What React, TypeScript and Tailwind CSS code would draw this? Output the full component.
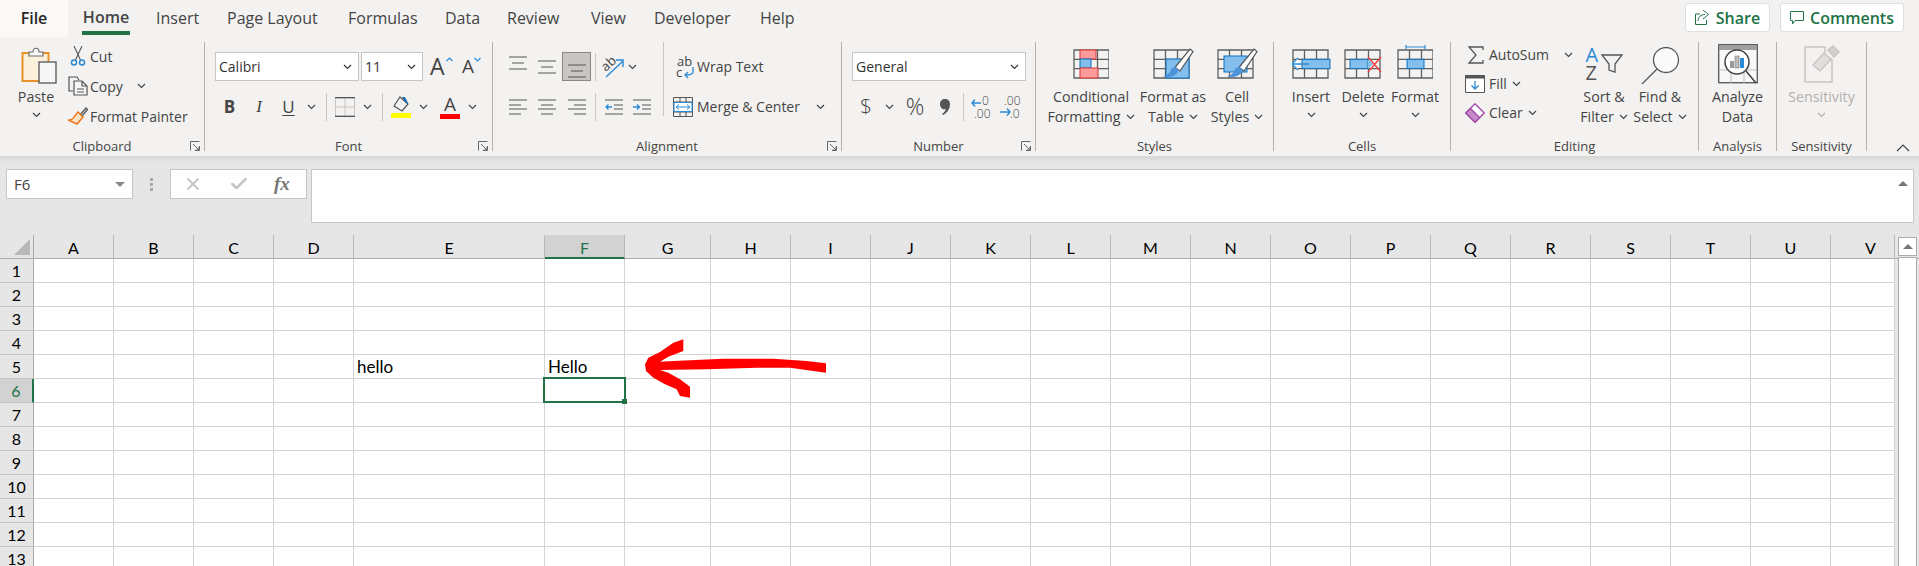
import type { ReactNode } from "react";
import { Check, X } from "lucide-react";

const GREEN = "#217346";
const BLUE = "#2b8ad6";

const tabs = [
  { name: "Insert", w: "w-[71px]" },
  { name: "Page Layout", w: "w-[121px]" },
  { name: "Formulas", w: "w-[97px]" },
  { name: "Data", w: "w-[62px]" },
  { name: "Review", w: "w-[84px]" },
  { name: "View", w: "w-[63px]" },
  { name: "Developer", w: "w-[106px]" },
  { name: "Help", w: "w-[60px]" },
];

const columns = [
  { name: "A", w: "w-[80px]" },
  { name: "B", w: "w-[80px]" },
  { name: "C", w: "w-[80px]" },
  { name: "D", w: "w-[80px]" },
  { name: "E", w: "w-[191px]" },
  { name: "F", w: "w-[80px]" },
  { name: "G", w: "w-[86px]" },
  { name: "H", w: "w-[80px]" },
  { name: "I", w: "w-[80px]" },
  { name: "J", w: "w-[80px]" },
  { name: "K", w: "w-[80px]" },
  { name: "L", w: "w-[80px]" },
  { name: "M", w: "w-[80px]" },
  { name: "N", w: "w-[80px]" },
  { name: "O", w: "w-[80px]" },
  { name: "P", w: "w-[80px]" },
  { name: "Q", w: "w-[80px]" },
  { name: "R", w: "w-[80px]" },
  { name: "S", w: "w-[80px]" },
  { name: "T", w: "w-[80px]" },
  { name: "U", w: "w-[80px]" },
  { name: "V", w: "w-[64px]" },
];

const rows = [1, 2, 3, 4, 5, 6, 7, 8, 9, 10, 11, 12, 13];

function Chev({ className = "" }: { className?: string }) {
  return (
    <svg width="9" height="6" viewBox="0 0 9 6" className={className} fill="none" stroke="currentColor" strokeWidth="1.2">
      <path d="M1 1l3.5 3.5L8 1" />
    </svg>
  );
}

function Launcher() {
  return (
    <svg width="10" height="10" viewBox="0 0 10 10" className="absolute right-[4px] bottom-0" fill="none" stroke="#666" strokeWidth="1">
      <path d="M.5 9.5v-9h9M9.5 5v4.5H5M3 3l6 6M5.5 9H9V5.5" />
    </svg>
  );
}

function Group({ w, label, children }: { w: string; label: string; children: ReactNode }) {
  return (
    <div className={`${w} relative flex h-[109px] shrink-0 flex-col border-r border-[#b3b0ad]`}>
      <div className="h-[95px] shrink-0">{children}</div>
      <div className="text-center text-[13px] leading-[18px] text-[#444]">{label}</div>
    </div>
  );
}

function Big({ w, icon, lines, chev, last, gray }: { w: string; icon: ReactNode; lines: string[]; chev?: boolean; last?: boolean; gray?: boolean }) {
  return (
    <div className={`${w} flex shrink-0 flex-col items-center text-[14.25px] leading-[20px] ${gray ? "text-[#b3b0ad]" : "text-[#444]"}`}>
      <div className="flex h-[45px] items-start justify-center">{icon}</div>
      {lines.map((l, i) => (
        <div key={l} className="flex h-[20px] items-center gap-[5px] whitespace-nowrap">
          {l}
          {chev && i === lines.length - 1 && <Chev />}
        </div>
      ))}
      {last && <Chev className="mt-[5px]" />}
    </div>
  );
}

function AlignV({ pos }: { pos: number }) {
  return (
    <svg width="18" height="26" viewBox="0 0 18 26" stroke="#555" strokeWidth="1.2">
      <path d={`M0 ${pos}h18M3 ${pos + 6}h12M0 ${pos + 12}h18`} />
    </svg>
  );
}

function AlignH({ kind }: { kind: "l" | "c" | "r" }) {
  const short = kind === "l" ? 0 : kind === "c" ? 3 : 6;
  return (
    <svg width="18" height="18" viewBox="0 0 18 18" stroke="#555" strokeWidth="1.2">
      <path d={`M0 2h18M${short} 7h12M0 11h18M${short} 16h12`} />
    </svg>
  );
}

function Indent({ inc }: { inc?: boolean }) {
  return (
    <svg width="18" height="18" viewBox="0 0 18 18" fill="none">
      <path d="M0 2h18M9 7h9M9 11h9M0 16h18" stroke="#555" strokeWidth="1.2" />
      {inc ? <path d="M0 9h6M4 6.5L6.5 9 4 11.5" stroke={BLUE} strokeWidth="1.4" /> : <path d="M7 9H1M3.5 6.5L1 9l2.5 2.5" stroke={BLUE} strokeWidth="1.4" />}
    </svg>
  );
}

function Grid({ children, w = 36, h = 28, extra = 0 }: { children?: ReactNode; w?: number; h?: number; extra?: number }) {
  return (
    <svg width={w + extra} height={h + 6} viewBox={`-1 -5 ${w + extra} ${h + 6}`} className="mt-[3px]" fill="none">
      <path d="M0 0h35v28H0zM0 9.3h35M0 18.6h35M11.5 0v28M23.5 0v28" stroke="#5f5f5f" strokeWidth="1.3" />
      {children}
    </svg>
  );
}

function Brush() {
  return (
    <g>
      <path d="M36 -1l3 2.5L26 21l-5-3.5z" fill="#fff" stroke="#555" strokeWidth="1.2" />
      <path d="M21 17c-4 0-4 4-6 6-2 2-4 3-6 3 5 2 12 1 15-4 1-2-.5-4.5-3-5z" fill="#4d93d9" />
    </g>
  );
}

function Sep({ h = "h-[28px]" }: { h?: string }) {
  return <div className={`${h} w-px bg-[#c8c6c4]`} />;
}

function Box({ w, children, className = "" }: { w: string; children: ReactNode; className?: string }) {
  return <div className={`${w} flex h-[29px] shrink-0 items-center justify-center ${className}`}>{children}</div>;
}

function Select({ w, text }: { w: string; text: string }) {
  return (
    <div className={`${w} flex h-[29px] shrink-0 items-center justify-between border border-[#c8c6c4] bg-white pr-[6px] pl-[3px] text-[14px] text-[#333]`}>
      {text}
      <Chev />
    </div>
  );
}

function Clipboard() {
  return (
    <div className="flex">
      <div className="flex w-[66px] shrink-0 flex-col items-center pl-[6px] text-[14.25px] leading-[20px] text-[#444]">
        <svg width="36" height="40" viewBox="0 0 36 40" className="mt-[3px] ml-[5px]" fill="none">
          <rect x="1.5" y="8" width="26" height="28" fill="#fbf0dc" stroke="#e8912d" strokeWidth="2" />
          <path d="M8 11V7h4c0-5 6-5 6 0h4v4z" fill="#f8f8f8" stroke="#6e6e6e" strokeWidth="1.2" />
          <rect x="18" y="17" width="17" height="21" fill="#f7f7f7" stroke="#555" strokeWidth="1.3" />
        </svg>
        <div className="mt-[2px] h-[20px]">Paste</div>
        <Chev className="mt-[5px]" />
      </div>
      <div className="-mt-px flex flex-col text-[14px] text-[#444]">
        <div className="flex h-[30px] items-center">
          <div className="flex w-[24px] justify-center">
            <svg width="16" height="20" viewBox="0 0 16 20" fill="none">
              <path d="M4 0l6.5 14M12 0L5.5 14" stroke="#555" strokeWidth="1.1" />
              <circle cx="4" cy="16.5" r="2.5" stroke={BLUE} strokeWidth="1.5" />
              <circle cx="12" cy="16.5" r="2.5" stroke={BLUE} strokeWidth="1.5" />
            </svg>
          </div>
          Cut
        </div>
        <div className="flex h-[30px] items-center">
          <div className="flex w-[24px] justify-center">
            <svg width="20" height="20" viewBox="0 0 20 20" fill="none" stroke="#555" strokeWidth="1.2">
              <path d="M5 15H1V1h8l2 3" />
              <path d="M6 5h8l5 5v9H6zM14 5v5h5M9 13h7M9 16h7" fill="#f7f7f7" />
            </svg>
          </div>
          Copy
          <Chev className="ml-[14px]" />
        </div>
        <div className="flex h-[30px] items-center">
          <div className="flex w-[24px] justify-center">
            <svg width="20" height="20" viewBox="0 0 20 20" fill="none">
              <path d="M12 9l6-7 1.5 1.5-6 7" stroke="#555" strokeWidth="1.3" />
              <path d="M10 6l5 5-6 7-9-4c3 0 5-1 6-3z" fill="#fbe3c4" stroke="#e8761e" strokeWidth="1.5" />
            </svg>
          </div>
          Format Painter
        </div>
      </div>
    </div>
  );
}

function FontGroup() {
  return (
    <div className="pl-[10px] text-[#444]">
      <div className="mt-[10px] flex items-center">
        <Select w="w-[144px]" text="Calibri" />
        <Select w="w-[62px] ml-[2px]" text="11" />
        <div className="relative ml-[7px] flex h-[29px] w-[20px] items-center text-[23px]">
          A
          <svg width="7" height="5" viewBox="0 0 7 5" className="absolute top-[5px] left-[16px]" fill="none" stroke={BLUE} strokeWidth="1.2">
            <path d="M.5 4l3-3 3 3" />
          </svg>
        </div>
        <div className="relative ml-[12px] flex h-[29px] w-[18px] items-center text-[19px]">
          A
          <svg width="7" height="5" viewBox="0 0 7 5" className="absolute top-[5px] left-[12px]" fill="none" stroke={BLUE} strokeWidth="1.2">
            <path d="M.5 1l3 3 3-3" />
          </svg>
        </div>
      </div>
      <div className="mt-[11px] flex items-center text-[17px]">
        <Box w="w-[29px]" className="font-bold">B</Box>
        <Box w="w-[30px]" className="font-['Liberation_Serif'] italic">I</Box>
        <Box w="w-[29px]" className="underline underline-offset-2">U</Box>
        <Box w="w-[16px]"><Chev /></Box>
        <Box w="w-[14px]"><Sep /></Box>
        <Box w="w-[24px]">
          <svg width="20" height="20" viewBox="0 0 20 20" fill="none">
            <path d="M.5 1h19v18H.5zM10 1v18M.5 10h19" stroke="#c8c6c4" strokeWidth="1" />
            <path d="M0 .7h20M0 19.3h20" stroke="#555" strokeWidth="1.3" />
          </svg>
        </Box>
        <Box w="w-[20px]"><Chev /></Box>
        <Box w="w-[10px]"><Sep /></Box>
        <Box w="w-[28px]">
          <svg width="20" height="22" viewBox="0 0 20 22" fill="none">
            <path d="M9 1l8 7-6 7-8-5z" stroke="#555" strokeWidth="1.2" />
            <path d="M11 1h3l3 6v2l-5-6z" fill="#1a6fb5" />
            <rect y="17" width="20" height="5" fill="#ffff00" />
          </svg>
        </Box>
        <Box w="w-[16px]"><Chev /></Box>
        <div className="ml-[5px] flex h-[29px] w-[28px] shrink-0 flex-col items-center">
          <span className="mt-[-1px] h-[21px] text-[19px] leading-[26px]">A</span>
          <div className="mt-[2px] h-[5px] w-[20px] bg-[#ff0000]" />
        </div>
        <Box w="w-[16px]"><Chev /></Box>
      </div>
    </div>
  );
}

function Alignment() {
  return (
    <div className="flex text-[#444]">
      <div className="flex h-[74px] w-[171px] flex-col border-r border-[#c8c6c4]">
        <div className="mt-[10px] flex items-center pl-[11px]">
          <Box w="w-[28px]"><AlignV pos={3} /></Box>
          <Box w="w-[30px]"><AlignV pos={7} /></Box>
          <Box w="w-[29px]" className="border border-[#8a8886] bg-[#c8c6c4]"><AlignV pos={11} /></Box>
          <Box w="w-[9px]"><Sep /></Box>
          <Box w="w-[28px]">
            <svg width="22" height="22" viewBox="0 0 22 22" fill="none" className="overflow-visible">
              <text x="-1" y="12" transform="rotate(-42 6 9)" fontSize="13" fill="#444" fontFamily="Open Sans">ab</text>
              <path d="M3 21L20 5M13 4h7v7" stroke={BLUE} strokeWidth="1.4" />
            </svg>
          </Box>
          <Chev />
        </div>
        <div className="mt-[11px] flex items-center pl-[11px]">
          <Box w="w-[28px]"><AlignH kind="l" /></Box>
          <Box w="w-[30px]"><AlignH kind="c" /></Box>
          <Box w="w-[29px]"><AlignH kind="r" /></Box>
          <Box w="w-[9px]"><Sep /></Box>
          <Box w="w-[28px]"><Indent /></Box>
          <Box w="w-[28px]"><Indent inc /></Box>
        </div>
      </div>
      <div className="flex flex-col pl-[9px] text-[14px]">
        <div className="mt-[10px] flex h-[29px] items-center">
          <svg width="20" height="24" viewBox="0 0 20 24" fill="none" className="mr-[1px] ml-[3px] overflow-visible">
            <text x="1" y="11" fontSize="13" fill="#444" fontFamily="Open Sans">ab</text>
            <text x="0" y="22" fontSize="13" fill="#444" fontFamily="Open Sans">c</text>
            <path d="M17 12v5c0 3-5 3-8 3M12 17l-3 3 3 3" stroke={BLUE} strokeWidth="1.3" />
          </svg>
          Wrap Text
        </div>
        <div className="mt-[11px] flex h-[29px] items-center">
          <svg width="20" height="20" viewBox="0 0 20 20" fill="none" className="mr-[4px]">
            <path d="M.5 .5h19v19H.5zM.5 5h19M.5 15h19M7 .5V5M13 .5V5M7 15v4.5M13 15v4.5" stroke="#555" />
            <rect x="1" y="5.5" width="18" height="9" fill="#fff" stroke={BLUE} />
            <path d="M3 10h14M6 7.5L3 10l3 2.5M14 7.5l3 2.5-3 2.5" stroke={BLUE} />
          </svg>
          Merge &amp; Center
          <Chev className="ml-[16px]" />
        </div>
      </div>
    </div>
  );
}

function DecIcon({ inc }: { inc?: boolean }) {
  return (
    <svg width="20" height="26" viewBox="0 0 20 26" fill="none" className="overflow-visible">
      <text x={inc ? 11 : 4} y="11" fontSize="12" fill="#444" fontFamily="Open Sans">{inc ? "0" : ".00"}</text>
      <text x={inc ? 3 : 10} y="24" fontSize="12" fill="#444" fontFamily="Open Sans">{inc ? ".00" : ".0"}</text>
      {inc ? (
        <path d="M10 9H1M4 5.5L1 9l3 3.5" stroke={BLUE} strokeWidth="1.4" />
      ) : (
        <path d="M0 18h10M7 14.5l3 3.5-3 3.5" stroke={BLUE} strokeWidth="1.4" />
      )}
    </svg>
  );
}

function NumberGroup() {
  return (
    <div className="pl-[10px] text-[#444]">
      <div className="mt-[10px]">
        <Select w="w-[174px]" text="General" />
      </div>
      <div className="mt-[11px] flex items-center text-[21px] font-light">
        <Box w="w-[28px]">$</Box>
        <Box w="w-[18px]"><Chev /></Box>
        <Box w="w-[34px]" className="text-[23px]">%</Box>
        <Box w="w-[26px]">
          <svg width="10" height="16" viewBox="0 0 10 16" fill="#555">
            <path d="M5 0c3 0 5 2 5 5 0 5-3 9-7 11l-1-1c2-1 3-3 4-5-3 1-6-1-6-5 0-3 2-5 5-5z" />
          </svg>
        </Box>
        <Box w="w-[10px]"><Sep /></Box>
        <Box w="w-[25px]"><DecIcon inc /></Box>
        <Box w="w-[33px]"><DecIcon /></Box>
      </div>
    </div>
  );
}

function StylesGroup() {
  return (
    <div className="flex pl-[10px]">
      <Big
        w="w-[90px]"
        lines={["Conditional", "Formatting"]}
        chev
        icon={
          <Grid>
            <rect x="6" y="0" width="16" height="9" fill="#ff9a9a" stroke="#d83b3b" />
            <rect x="6" y="9" width="11" height="9" fill="#83beec" stroke="#0e70c0" />
            <rect x="6" y="18" width="18" height="10" fill="#ff9a9a" stroke="#d83b3b" />
          </Grid>
        }
      />
      <Big
        w="w-[74px]"
        lines={["Format as", "Table"]}
        chev
        icon={
          <Grid extra={5}>
            <rect x="12" y="9" width="23" height="19" fill="#83beec" stroke="#0e70c0" />
            <Brush />
          </Grid>
        }
      />
      <Big
        w="w-[54px]"
        lines={["Cell", "Styles"]}
        chev
        icon={
          <Grid extra={5}>
            <rect x="6" y="6" width="23" height="16" fill="#83beec" stroke="#0e70c0" />
            <Brush />
          </Grid>
        }
      />
    </div>
  );
}

function CellsGroup() {
  return (
    <div className="flex pl-[11px]">
      <Big
        w="w-[52px]"
        lines={["Insert"]}
        last
        icon={
          <Grid extra={3}>
            <rect x="9" y="9.3" width="28" height="9.3" fill="#83beec" stroke="#0e70c0" />
            <path d="M16 14H-1M5 8l-6 6 6 6" stroke={BLUE} strokeWidth="1.3" fill="#fff" />
          </Grid>
        }
      />
      <Big
        w="w-[52px]"
        lines={["Delete"]}
        last
        icon={
          <Grid extra={3}>
            <rect x="5" y="9.3" width="18" height="9.3" fill="#83beec" stroke="#0e70c0" />
            <path d="M23 9l5 5-5 5z" fill="#83beec" />
            <path d="M23 7l13 15M36 7L23 22" stroke="#f04040" strokeWidth="1.4" />
          </Grid>
        }
      />
      <Big
        w="w-[52px]"
        lines={["Format"]}
        last
        icon={
          <Grid>
            <rect x="9" y="9.3" width="17" height="9.3" fill="#83beec" stroke="#0e70c0" />
            <path d="M8 -3h19M8 -5v4M27 -5v4" stroke={BLUE} strokeWidth="1.2" />
          </Grid>
        }
      />
    </div>
  );
}

function EditingGroup() {
  return (
    <div className="flex pl-[14px]">
      <div className="-mt-[2px] flex w-[113px] shrink-0 flex-col text-[14px] text-[#444]">
        <div className="flex h-[29px] items-center">
          <div className="w-[24px] shrink-0">
            <svg width="18" height="18" viewBox="0 0 18 18" fill="none" stroke="#555" strokeWidth="1.3" className="ml-[2px]">
              <path d="M16 4V1H2l7 8-7 8h14v-3" />
            </svg>
          </div>
          AutoSum
          <Chev className="ml-[15px]" />
        </div>
        <div className="flex h-[29px] items-center">
          <div className="w-[24px] shrink-0">
            <svg width="20" height="18" viewBox="0 0 20 18" fill="none">
              <path d="M.5 .5h19v17H.5z" fill="#fff" stroke="#555" />
              <path d="M0 2h20" stroke="#555" strokeWidth="3" />
              <path d="M10 6v8M6.5 10.5L10 14l3.5-3.5" stroke={BLUE} strokeWidth="1.3" />
            </svg>
          </div>
          Fill
          <Chev className="ml-[5px]" />
        </div>
        <div className="flex h-[29px] items-center">
          <div className="w-[24px] shrink-0">
            <svg width="20" height="20" viewBox="0 0 20 20" fill="none">
              <path d="M10 .8L19.2 10 10 19.2 .8 10z" fill="#fff" stroke="#a64dac" strokeWidth="1.4" />
              <path d="M.8 10L5.5 5.5l9.2 9.2L10 19.2z" fill="#c48bc8" stroke="#a64dac" strokeWidth="1.4" />
            </svg>
          </div>
          Clear
          <Chev className="ml-[5px]" />
        </div>
      </div>
      <Big
        w="w-[52px]"
        lines={["Sort &", "Filter"]}
        chev
        icon={
          <div className="relative mt-[4px] h-[36px] w-[37px] text-[20px] leading-[18px]">
            <span className="block text-[#2b8ad6]">A</span>
            <span className="block text-[#555]">Z</span>
            <svg width="22" height="20" viewBox="0 0 22 20" className="absolute top-[8px] right-0" fill="none" stroke="#555" strokeWidth="1.3">
              <path d="M1 1h20l-7 9v8l-6-2v-6z" />
            </svg>
          </div>
        }
      />
      <Big
        w="w-[60px]"
        lines={["Find &", "Select"]}
        chev
        icon={
          <svg width="38" height="38" viewBox="0 0 38 38" fill="none" stroke="#555" strokeWidth="1.3" className="mt-[5px]">
            <circle cx="25" cy="13" r="12.5" fill="#fafafa" />
            <path d="M16 22L1 37" />
          </svg>
        }
      />
    </div>
  );
}

function AnalyzeIcon() {
  return (
    <svg width="40" height="40" viewBox="0 0 40 40" fill="none" className="mt-[2px]">
      <rect x=".7" y=".7" width="38.6" height="38" stroke="#555" strokeWidth="1.3" fill="#f8f8f8" />
      <rect x="1" y="1" width="38" height="5" fill="#a19f9d" />
      <path d="M1 26h38M13 27v12M26 27v12" stroke="#bbb" />
      <circle cx="19" cy="18" r="12" fill="#fff" stroke="#444" strokeWidth="1.5" />
      <rect x="12" y="17" width="4" height="7" fill="#999" />
      <rect x="17" y="12" width="4" height="12" fill="#bbb" stroke="#777" strokeWidth=".6" />
      <rect x="22" y="14" width="4" height="10" fill="#2b8ad6" />
      <path d="M28 27l10 12" stroke="#444" strokeWidth="1.6" />
    </svg>
  );
}

function SensitivityIcon() {
  return (
    <svg width="36" height="38" viewBox="0 0 36 38" fill="none" stroke="#c8c6c4" strokeWidth="1.5" className="mt-[3px]">
      <path d="M1 2h20v10l7 3v22H1z" />
      <path d="M9 20l11-12 7 6-11 12z" fill="#e1dfdd" />
      <path d="M24 5l5-4 6 6-5 5z" fill="#d2d0ce" />
    </svg>
  );
}

function ShareIcon() {
  return (
    <svg width="15" height="15" viewBox="0 0 15 15" fill="none" stroke={GREEN} strokeWidth="1">
      <path d="M5 4H.5v10.5h11V10M3 11c0-4 3-6.500 7-6.500M8 0l5.500 4.500L8 9" />
    </svg>
  );
}

function CommentIcon() {
  return (
    <svg width="14" height="14" viewBox="0 0 14 14" fill="none" stroke={GREEN} strokeWidth="1">
      <path d="M.5 .5h13v9H5L2.5 13V9.5h-2z" />
    </svg>
  );
}

function TabBar() {
  return (
    <div className="flex h-[37px] items-start">
      <div className="flex h-[37px] w-[68px] items-center justify-center bg-[#faf9f8] pb-[2px] text-[16px] font-semibold text-[#262626]">File</div>
      <div className="ml-[14px] w-[74px]">
        <div className="flex h-[35px] w-[48px] items-center justify-center border-b-[4px] border-[#217346] pt-[2px] text-[16px] font-semibold text-[#444]">Home</div>
      </div>
      {tabs.map((t) => (
        <div key={t.name} className={`${t.w} flex h-[37px] items-center pb-[2px] text-[16px] text-[#444]`}>{t.name}</div>
      ))}
      <div className="mt-[3px] ml-auto flex gap-[10px] pr-[15px] text-[16px] font-semibold text-[#217346]">
        <div className="flex h-[29px] w-[85px] items-center justify-center gap-[6px] rounded-[3px] border border-[#e1dfdd] bg-white">
          <ShareIcon />
          Share
        </div>
        <div className="flex h-[29px] w-[124px] items-center justify-center gap-[6px] rounded-[3px] border border-[#e1dfdd] bg-white">
          <CommentIcon />
          Comments
        </div>
      </div>
    </div>
  );
}

function Ribbon() {
  return (
    <div className="h-[156px] bg-[#f3f2f1]">
      <TabBar />
      <div className="relative flex h-[119px] pt-[5px]">
        <Group w="w-[205px]" label="Clipboard"><Clipboard /><Launcher /></Group>
        <Group w="w-[288px]" label="Font"><FontGroup /><Launcher /></Group>
        <Group w="w-[349px]" label="Alignment"><Alignment /><Launcher /></Group>
        <Group w="w-[194px]" label="Number"><NumberGroup /><Launcher /></Group>
        <Group w="w-[238px]" label="Styles"><StylesGroup /></Group>
        <Group w="w-[177px]" label="Cells"><CellsGroup /></Group>
        <Group w="w-[248px]" label="Editing"><EditingGroup /></Group>
        <Group w="w-[78px]" label="Analysis">
          <Big w="w-full" lines={["Analyze", "Data"]} icon={<AnalyzeIcon />} />
        </Group>
        <Group w="w-[90px]" label="Sensitivity">
          <Big w="w-full" gray lines={["Sensitivity"]} last icon={<SensitivityIcon />} />
        </Group>
        <svg width="14" height="8" viewBox="0 0 14 8" className="absolute right-[9px] bottom-[4px]" fill="none" stroke="#444" strokeWidth="1.2">
          <path d="M1 7l6-6 6 6" />
        </svg>
      </div>
    </div>
  );
}

function FormulaBar() {
  return (
    <div className="h-[79px] bg-[#e6e6e6] bg-gradient-to-b from-[#d6d6d6] to-[#e6e6e6] bg-[length:100%_6px] bg-no-repeat">
      <div className="flex items-start pt-[13px] pl-[6px]">
        <div className="flex h-[30px] w-[127px] items-center justify-between border border-[#c6c6c6] bg-white pr-[7px] pl-[7px] text-[15px] text-[#444]">
          F6
          <div className="h-0 w-0 border-x-[5px] border-t-[5px] border-x-transparent border-t-[#888]" />
        </div>
        <div className="flex h-[30px] w-[37px] flex-col items-center justify-center gap-[2px]">
          <div className="h-[3px] w-[3px] bg-[#aaa]" />
          <div className="h-[3px] w-[3px] bg-[#aaa]" />
          <div className="h-[3px] w-[3px] bg-[#aaa]" />
        </div>
        <div className="flex h-[30px] w-[137px] items-center border border-[#c6c6c6] bg-white pl-[12px]">
          <X size={20} strokeWidth={2.2} className="text-[#c4c4c4]" />
          <Check size={20} strokeWidth={3} className="ml-[26px] text-[#c4c4c4]" />
          <span className="ml-[25px] font-['Liberation_Serif'] text-[19px] font-bold text-[#777] italic">fx</span>
        </div>
        <div className="ml-[4px] flex h-[54px] w-[1603px] justify-end border border-[#c6c6c6] bg-white pt-[11px] pr-[5px]">
          <div className="h-0 w-0 border-x-[5px] border-b-[5px] border-x-transparent border-b-[#777]" />
        </div>
      </div>
    </div>
  );
}

function Sheet() {
  return (
    <div className="relative h-[331px] overflow-hidden bg-[#e6e6e6] font-['Lato'] text-[16px] text-black">
      <div className="flex h-[24px] border-b border-[#ababab]">
        <div className="flex h-[23px] w-[34px] shrink-0 items-end justify-end border-r border-[#ababab] pr-[3px] pb-[3px]">
          <div className="h-0 w-0 border-b-[16px] border-l-[16px] border-b-[#b8b8b8] border-l-transparent" />
        </div>
        {columns.map((c) => (
          <div
            key={c.name}
            className={`${c.w} flex h-[24px] shrink-0 justify-center overflow-hidden border-r border-[#b8b8b8] pt-[1px] ${
              c.name === "F" ? "mb-[-1px] border-b-[2px] border-b-[#217346] bg-[#d2d2d2] text-[#217346]" : ""
            }`}
          >
            <span className={`${c.name === "V" ? "w-[80px] shrink-0 self-start pl-[16px]" : ""} text-center`}>{c.name}</span>
          </div>
        ))}
      </div>
      {rows.map((r) => (
        <div key={r} className="flex h-[24px]">
          <div
            className={`flex w-[34px] shrink-0 items-center justify-center border-r border-b border-[#ababab] border-b-[#c4c4c4] ${
              r === 6 ? "border-r-[2px] border-r-[#217346] bg-[#d2d2d2] text-[#217346]" : ""
            }`}
          >
            {r}
          </div>
          {columns.map((c) => (
            <div key={c.name} className={`${c.w} flex shrink-0 items-center border-r border-b border-[#d4d4d4] bg-white pl-[3px] text-[17px]`}>
              {r === 5 && c.name === "E" ? "hello" : r === 5 && c.name === "F" ? "Hello" : ""}
            </div>
          ))}
        </div>
      ))}

      {/* scrollbar */}
      <div className="absolute top-[2px] right-[2px] w-[19px]">
        <div className="flex h-[19px] items-center justify-center border border-[#ababab] bg-white">
          <div className="h-0 w-0 border-x-[5px] border-b-[5px] border-x-transparent border-b-[#777]" />
        </div>
        <div className="mt-[1px] h-[320px] border border-[#ababab] bg-white" />
      </div>

      {/* selected cell */}
      <div className="absolute top-[142px] left-[543px] h-[26px] w-[83px] border-2 border-[#217346]">
        <div className="absolute right-[-3px] bottom-[-3px] h-[5px] w-[5px] bg-[#217346]" />
      </div>

      {/* hand drawn arrow */}
      <svg width="190" height="65" viewBox="900 20 570 195" className="absolute top-[101px] left-[640px]">
        <path
          d="M1458 102L1400 95 1300 88 1150 88 1000 95 960 97 985 82 1030 65 1030 30 1000 40 960 68 925 85 915 105 918 125 940 145 975 165 1010 180 1020 200 1050 205 1050 172 1020 150 985 130 960 122 1100 120 1250 115 1350 115 1420 125 1458 130z"
          fill="#ff0000"
        />
      </svg>
    </div>
  );
}

export default function App() {
  return (
    <div className="h-[566px] w-[1919px] overflow-hidden font-['Open_Sans',sans-serif]">
      <Ribbon />
      <FormulaBar />
      <Sheet />
    </div>
  );
}
